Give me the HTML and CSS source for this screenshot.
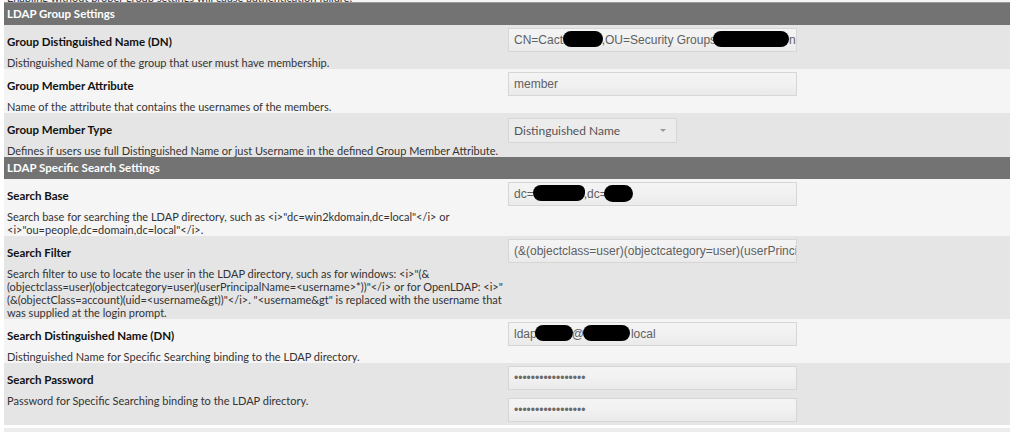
FILE: index.html
```html
<!DOCTYPE html>
<html>
<head>
<meta charset="utf-8">
<title>LDAP Settings</title>
<link rel="stylesheet" href="styles.css">
</head>
<body>
<div class="page">
  <div class="prev"><div class="prev-text">Enabling without proper group settings will cause authentication failure.</div></div>

  <div class="sec-head">LDAP Group Settings</div>
  <div class="row dark">
    <div class="left">
      <div class="name">Group Distinguished Name (DN)</div>
      <div class="desc">Distinguished Name of the group that user must have membership.</div>
    </div>
    <div class="right">
      <div class="field">CN=Cacti<span class="redact rd1"></span>,OU=Security Groups<span class="redact rd2"></span>n</div>
    </div>
  </div>
  <div class="row light">
    <div class="left">
      <div class="name">Group Member Attribute</div>
      <div class="desc">Name of the attribute that contains the usernames of the members.</div>
    </div>
    <div class="right">
      <div class="field">member</div>
    </div>
  </div>
  <div class="row dark">
    <div class="left">
      <div class="name">Group Member Type</div>
      <div class="desc">Defines if users use full Distinguished Name or just Username in the defined Group Member Attribute.</div>
    </div>
    <div class="right">
      <div class="select"><span>Distinguished Name</span><span class="caret"></span></div>
    </div>
  </div>

  <div class="sec-head">LDAP Specific Search Settings</div>
  <div class="row light">
    <div class="left">
      <div class="name">Search Base</div>
      <div class="desc">Search base for searching the LDAP directory, such as &lt;i&gt;"dc=win2kdomain,dc=local"&lt;/i&gt; or<br>&lt;i&gt;"ou=people,dc=domain,dc=local"&lt;/i&gt;.</div>
    </div>
    <div class="right">
      <div class="field">dc=<span class="redact rd3"></span>,dc=<span class="redact rd4"></span></div>
    </div>
  </div>
  <div class="row dark">
    <div class="left">
      <div class="name">Search Filter</div>
      <div class="desc">Search filter to use to locate the user in the LDAP directory, such as for windows: &lt;i&gt;"(&amp;<br>(objectclass=user)(objectcategory=user)(userPrincipalName=&lt;username&gt;*))"&lt;/i&gt; or for OpenLDAP: &lt;i&gt;"<br>(&amp;(objectClass=account)(uid=&lt;username&amp;gt))"&lt;/i&gt;. "&lt;username&amp;gt" is replaced with the username that<br>was supplied at the login prompt.</div>
    </div>
    <div class="right">
      <div class="field">(&amp;(objectclass=user)(objectcategory=user)(userPrincipalName=&lt;username&gt;*))</div>
    </div>
  </div>
  <div class="row light">
    <div class="left">
      <div class="name">Search Distinguished Name (DN)</div>
      <div class="desc">Distinguished Name for Specific Searching binding to the LDAP directory.</div>
    </div>
    <div class="right">
      <div class="field">ldap<span class="redact rd5"></span>@<span class="redact rd6"></span>local</div>
    </div>
  </div>
  <div class="row dark">
    <div class="left">
      <div class="name">Search Password</div>
      <div class="desc">Password for Specific Searching binding to the LDAP directory.</div>
    </div>
    <div class="right">
      <div class="field dots">•••••••••••••••••</div>
      <div class="field dots second">•••••••••••••••••</div>
    </div>
  </div>
  <div class="after"></div>
</div>
</body>
</html>
```

FILE: styles.css
```css
html, body {
  margin: 0;
  padding: 0;
  background: #ffffff;
  overflow: hidden;
}

body {
  font-family: Lato, "Open Sans", "Noto Sans", sans-serif;
  font-size: 11px;
  color: #333333;
}

.page {
  padding-left: 4px;
  width: 1006px;
}

.prev {
  height: 2px;
  overflow: hidden;
  background: #f5f5f5;
  border-bottom: 1px solid #9a9a9a;
}

.prev-text {
  margin-top: -9px;
  padding-left: 3px;
  line-height: 13px;
  white-space: nowrap;
}

.sec-head {
  background: #737373;
  color: #ffffff;
  font-weight: bold;
  height: 22px;
  line-height: 22px;
  padding-left: 3px;
  font-size: 11.5px;
}

.row {
  display: flex;
  align-items: flex-start;
}

.row.dark {
  background: #e5e5e5;
}

.row.light {
  background: #f5f5f5;
}

.left {
  flex: none;
  width: 498px;
  padding: 4px 0 0 3px;
}

.name {
  font-weight: bold;
  font-size: 11.5px;
  color: #111111;
  line-height: 14px;
  padding-top: 6px;
  white-space: nowrap;
}

.desc {
  padding-top: 7px;
  line-height: 13px;
  color: #333333;
  white-space: nowrap;
}

.right {
  flex: none;
  padding: 3px 0 3px 3px;
}

.field {
  box-sizing: border-box;
  width: 289px;
  height: 24px;
  line-height: 22px;
  border: 1px solid #d6d6d6;
  background: linear-gradient(to bottom, #f4f4f4 0%, #f1f1f1 50%, #eaeaea 100%);
  padding-left: 5px;
  font-family: "Liberation Sans", Arial, sans-serif;
  font-size: 12px;
  color: #606060;
  white-space: nowrap;
  overflow: hidden;
}

.field.second {
  margin-top: 8px;
}

.dots {
  color: #6a6a6a;
}

.redact {
  display: inline-block;
  height: 16px;
  background: #000000;
  border-radius: 8px;
  vertical-align: middle;
  margin-top: -3px;
}

.rd1 { width: 40px; margin-left: -3px; margin-right: -1px; }
.rd2 { width: 76px; margin-left: -3px; margin-right: 0; }
.rd3 { width: 52px; margin-left: -1px; margin-right: -1px; border-radius: 8px 6px 8px 8px; }
.rd4 { width: 29px; height: 17px; margin-left: -3px; border-radius: 9px; }
.rd5 { width: 38px; margin-left: -2px; margin-right: -1px; }
.rd6 { width: 47px; margin-left: -1px; margin-right: 1px; }

.select {
  box-sizing: border-box;
  width: 169px;
  height: 25px;
  margin-top: 2px;
  border: 1px solid #d6d6d6;
  background: #ececec;
  padding: 0 10px 0 5px;
  display: flex;
  align-items: center;
  justify-content: space-between;
  color: #555555;
  font-size: 12px;
}

.caret {
  width: 0;
  height: 0;
  border-left: 3px solid transparent;
  border-right: 3px solid transparent;
  border-top: 3px solid #9a9a9a;
}

.after {
  margin-top: 3px;
  height: 10px;
  background: #ececec;
}
```
